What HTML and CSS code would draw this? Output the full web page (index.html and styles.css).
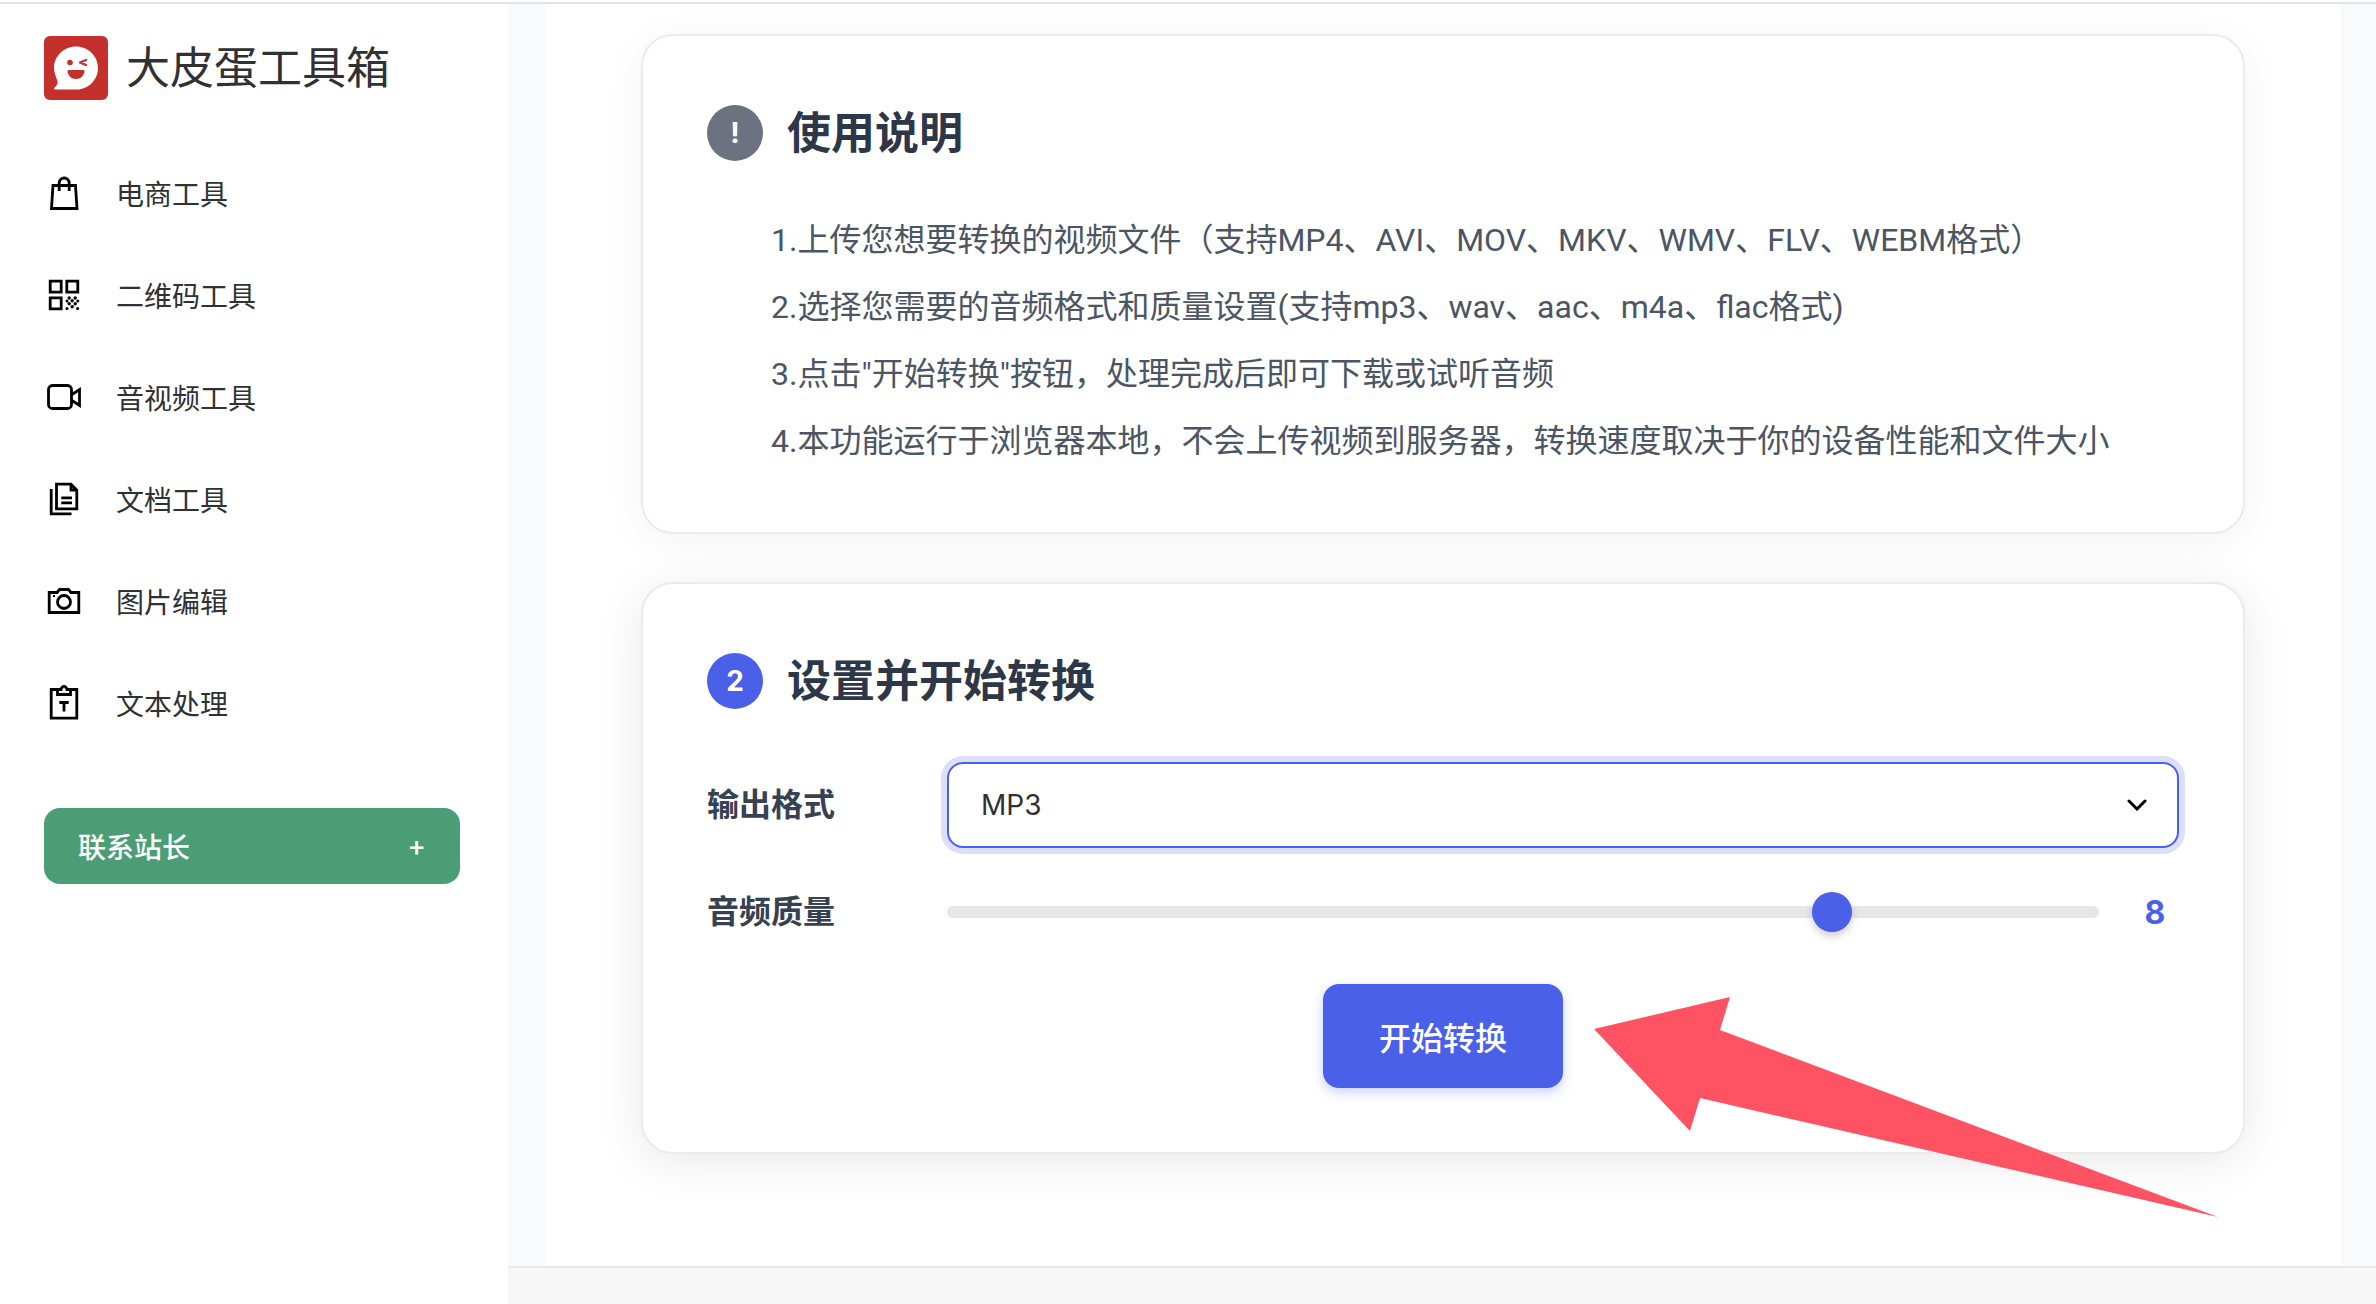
FILE: index.html
```html
<!DOCTYPE html>
<html lang="zh-CN">
<head>
    <meta charset="UTF-8">
    <meta name="viewport" content="width=device-width, initial-scale=1.0">
    <title>大皮蛋工具箱</title>
    <link rel="stylesheet" href="styles.css">
</head>
<body>
    <div class="layout">
        <aside class="sidebar">
            <a class="logo" href="#">
                <svg class="logo-icon" viewBox="0 0 64 64">
                    <rect width="64" height="64" rx="6" fill="#c4302b"/>
                    <path d="M32 10.500C44 10.500 54 20 54 32S44 53.500 33 53.500H11C10 53.500 9.800 52.500 10.500 51.800C13 49.500 14 47.500 13.500 45C12 41 10 36.500 10 32C10 20 20 10.500 32 10.500Z" fill="#fff"/>
                    <circle cx="26" cy="26.500" r="2.800" fill="#c4302b"/>
                    <path d="M42 24L36 26.500L42 29" fill="none" stroke="#c4302b" stroke-width="2.400" stroke-linecap="round" stroke-linejoin="round"/>
                    <path d="M24.500 34H39.500Q40.500 34 40.500 35C40 39.500 37 43 32 43S24 39.500 23.500 35Q23.500 34 24.500 34Z" fill="#c4302b"/>
                </svg>
                <span>大皮蛋工具箱</span>
            </a>
            <nav class="menu">
                <a class="menu-item" href="#">
                    <svg class="menu-icon" viewBox="0 0 40 40">
                        <path d="M9 12.500H31.500L33 35.500H7.500ZM15.200 18V10A5 5 0 0 1 25.200 10V18"/>
                    </svg>
                    <span>电商工具</span>
                </a>
                <a class="menu-item" href="#">
                    <svg class="menu-icon" viewBox="0 0 40 40">
                        <path d="M6.200 6.200H17.200V17.200H6.200ZM22.800 6.200H33.800V17.200H22.800ZM6.200 22.800H17.200V33.800H6.200Z"/>
                        <g class="fill">
                            <circle cx="25.200" cy="23" r="1.700"/>
                            <circle cx="31.200" cy="23" r="1.700"/>
                            <circle cx="23" cy="26" r="1.500"/>
                            <circle cx="28.200" cy="25.800" r="1.700"/>
                            <circle cx="33.800" cy="26" r="1.500"/>
                            <circle cx="25.200" cy="28.800" r="1.700"/>
                            <circle cx="31.200" cy="28.800" r="1.700"/>
                            <circle cx="23" cy="33.500" r="1.600"/>
                            <circle cx="28.200" cy="31.800" r="1.700"/>
                            <circle cx="33.600" cy="33.500" r="1.600"/>
                        </g>
                    </svg>
                    <span>二维码工具</span>
                </a>
                <a class="menu-item" href="#">
                    <svg class="menu-icon" viewBox="0 0 40 40">
                        <rect x="4.500" y="8.500" width="23" height="23" rx="4"/>
                        <path d="M28 17.500L35.500 12.500V28.500L28 23.500"/>
                    </svg>
                    <span>音视频工具</span>
                </a>
                <a class="menu-item" href="#">
                    <svg class="menu-icon" viewBox="0 0 40 40">
                        <path d="M12.500 5.200H27L32.800 11V29.800H12.500ZM27 5.200V11H32.800M17.300 18.800H28M17.300 23.800H28M7.200 10V34.800H27.500"/>
                    </svg>
                    <span>文档工具</span>
                </a>
                <a class="menu-item" href="#">
                    <svg class="menu-icon" viewBox="0 0 40 40">
                        <path d="M5.200 11.500H13L15.500 8.500H24.500L27 11.500H34.800V31.500H5.200Z"/>
                        <circle cx="20" cy="21" r="6.500"/>
                        <rect class="fill" x="9" y="14" width="2" height="2"/>
                    </svg>
                    <span>图片编辑</span>
                </a>
                <a class="menu-item" href="#">
                    <svg class="menu-icon" viewBox="0 0 40 40">
                        <path d="M13.500 6.500H7.200V35.200H32.800V6.500H26.500M13.500 6.500H17A3 3 0 0 1 23 6.500H26.500V11.500H13.500ZM15.300 19.500H24.700M20 19.500V28.500"/>
                    </svg>
                    <span>文本处理</span>
                </a>
            </nav>
            <button class="contact" type="button">
                <span>联系站长</span>
                <span>+</span>
            </button>
        </aside>

        <div class="main">
            <main class="content">
                <section class="card">
                    <h2 class="card-title"><span class="badge badge-info">!</span>使用说明</h2>
                    <ul class="steps">
                        <li>1.上传您想要转换的视频文件（支持MP4、AVI、MOV、MKV、WMV、FLV、WEBM格式）</li>
                        <li>2.选择您需要的音频格式和质量设置(支持mp3、wav、aac、m4a、flac格式)</li>
                        <li>3.点击"开始转换"按钮，处理完成后即可下载或试听音频</li>
                        <li>4.本功能运行于浏览器本地，不会上传视频到服务器，转换速度取决于你的设备性能和文件大小</li>
                    </ul>
                </section>

                <section class="card card-active">
                    <h2 class="card-title"><span class="badge">2</span>设置并开始转换</h2>
                    <div class="form-row">
                        <label for="format">输出格式</label>
                        <div class="select-wrap">
                            <select id="format">
                                <option>MP3</option>
                                <option>WAV</option>
                                <option>AAC</option>
                                <option>M4A</option>
                                <option>FLAC</option>
                            </select>
                            <svg class="chevron" viewBox="0 0 20 12"><path d="M2 2L10 10L18 2"/></svg>
                        </div>
                    </div>
                    <div class="form-row">
                        <label for="quality">音频质量</label>
                        <input type="range" id="quality" min="1" max="10" value="8">
                        <output for="quality" class="quality-value">8</output>
                    </div>
                    <div class="actions">
                        <div class="action-wrap">
                            <button class="start" type="button">开始转换</button>
                            <svg class="arrow" viewBox="0 0 624 220">
                                <path d="M0 32L136 0L126 33L624 220L106 101L96 134Z"/>
                            </svg>
                        </div>
                    </div>
                </section>
            </main>
            <footer class="footer"></footer>
        </div>
    </div>
</body>
</html>
```

FILE: styles.css
```css
* {
    box-sizing: border-box;
}

body {
    margin: 0;
    padding-top: 2px;
    font-family: Inter, "Noto Sans CJK SC", sans-serif;
    color: #303133;
    background: #fff;
}

button, select, input {
    font-family: inherit;
}

.layout {
    display: flex;
    min-height: calc(100vh - 2px);
    border-top: 2px solid #e4e4e4;
    overflow: hidden;
}

/* Sidebar */
.sidebar {
    flex: 0 0 508px;
    padding: 32px 48px 32px 44px;
}

.logo {
    display: flex;
    align-items: center;
    gap: 18px;
    font-size: 44px;
    line-height: 64px;
    color: #303133;
    text-decoration: none;
}

.logo-icon {
    width: 64px;
    height: 64px;
}

.menu {
    margin-top: 42px;
}

.menu-item {
    display: flex;
    align-items: center;
    gap: 32px;
    height: 102px;
    font-size: 28px;
    color: #303133;
    text-decoration: none;
}

.menu-icon {
    width: 40px;
    height: 40px;
    fill: none;
    stroke: #000;
    stroke-width: 2.8;
}

.menu-icon .fill {
    fill: #000;
    stroke: none;
}

.contact {
    display: flex;
    align-items: center;
    justify-content: space-between;
    width: 100%;
    height: 76px;
    margin-top: 54px;
    padding: 0 34px;
    border: none;
    border-radius: 16px;
    background: #4a9d74;
    color: #fff;
    font-size: 28px;
    font-weight: 500;
}

/* Main column */
.main {
    flex: 1;
    display: flex;
    flex-direction: column;
    background: #f9fafc;
}

.content {
    display: flex;
    flex-direction: column;
    gap: 48px;
    margin: 0 35px 0 37px;
    padding: 30px 96px 112px;
    background: #fff;
}

.card {
    padding: 64px;
    border: 2px solid #ebebeb;
    border-radius: 32px;
    background: #fff;
    box-shadow: 0 8px 40px rgba(0, 0, 0, 0.05);
}

.card-active {
    box-shadow: 0 8px 48px rgba(0, 0, 0, 0.09);
}

.card-title {
    display: flex;
    align-items: center;
    gap: 24px;
    margin: 0 0 48px;
    font-size: 44px;
    line-height: 66px;
    font-weight: 600;
    color: #2d3748;
}

.badge {
    width: 56px;
    height: 56px;
    border-radius: 50%;
    background: #4a60e8;
    color: #fff;
    font-size: 28px;
    line-height: 56px;
    font-weight: 700;
    text-align: center;
}

.badge-info {
    background: #6c727f;
}

.steps {
    display: flex;
    flex-direction: column;
    gap: 14px;
    margin: 0;
    padding: 0 0 0 64px;
    list-style: none;
    font-family: Roboto, "Noto Sans CJK SC", sans-serif;
    font-size: 32px;
    line-height: 53px;
    color: #4b5563;
}

.form-row {
    display: flex;
    align-items: center;
    margin-bottom: 40px;
}

.form-row label {
    width: 240px;
    font-size: 32px;
    line-height: 48px;
    font-weight: 600;
    color: #374151;
}

.select-wrap {
    position: relative;
    flex: 1;
}

.select-wrap select {
    display: block;
    width: 100%;
    height: 86px;
    padding: 0 32px;
    appearance: none;
    border: 2px solid #4a60e8;
    border-radius: 16px;
    outline: none;
    background: #fff;
    box-shadow: 0 0 0 6px #dbdffa;
    color: #303133;
    font-size: 28px;
}

.chevron {
    position: absolute;
    top: 37px;
    right: 32px;
    width: 20px;
    height: 12px;
    fill: none;
    stroke: #000;
    stroke-width: 3;
    stroke-linecap: round;
    pointer-events: none;
}

input[type="range"] {
    flex: 1;
    height: 12px;
    margin: 0 32px 0 0;
    appearance: none;
    border-radius: 6px;
    background: #e5e7eb;
}

input[type="range"]::-webkit-slider-thumb {
    appearance: none;
    width: 40px;
    height: 40px;
    border-radius: 50%;
    background: #4a60e8;
    box-shadow: 0 4px 8px rgba(0, 0, 0, 0.2);
}

.quality-value {
    width: 48px;
    font-size: 32px;
    font-weight: 700;
    text-align: center;
    color: #4a60e8;
}

.actions {
    display: flex;
    justify-content: center;
    margin-top: 48px;
}

.action-wrap {
    position: relative;
}

.start {
    display: block;
    width: 240px;
    height: 104px;
    border: none;
    border-radius: 16px;
    background: #4a60e8;
    box-shadow: 0 4px 12px rgba(74, 96, 232, 0.3);
    color: #fff;
    font-size: 32px;
    font-weight: 500;
}

/* Pointer drawn over the card */
.arrow {
    position: absolute;
    top: 13px;
    left: 271px;
    width: 624px;
    height: 220px;
    fill: #ff5263;
    pointer-events: none;
}

.footer {
    flex: 1;
    border-top: 2px solid #e9e9e9;
    background: #f7f7f7;
}
```
